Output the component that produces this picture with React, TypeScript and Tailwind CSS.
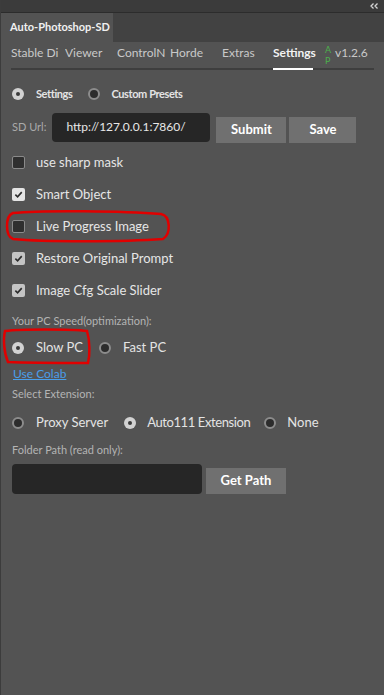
import React from 'react';

const font = { fontFamily: 'Lato, "Open Sans", sans-serif' };

const Check = ({ checked, dim }: { checked?: boolean; dim?: boolean }) =>
  checked ? (
    <span
      className={`flex h-[13px] w-[13px] shrink-0 items-center justify-center rounded-[2px] ${
        dim ? 'bg-[#c4c4c4]' : 'bg-[#e4e4e4]'
      }`}
    >
      <svg width="9" height="9" viewBox="0 0 10 10">
        <path d="M1.5 5.2 L4 7.6 L8.6 2.4" fill="none" stroke="#2b2b2b" strokeWidth="1.8" />
      </svg>
    </span>
  ) : (
    <span className="h-[13px] w-[13px] shrink-0 rounded-[2px] border border-[#8a8a8a] bg-[#2f2f2f]" />
  );

const Radio = ({ on, className = '' }: { on?: boolean; className?: string }) =>
  on ? (
    <span
      className={`flex h-[12px] w-[12px] shrink-0 items-center justify-center rounded-full bg-[#d2d2d2] ${className}`}
    >
      <span className="h-[4px] w-[4px] rounded-full bg-[#3a3a3a]" />
    </span>
  ) : (
    <span
      className={`block h-[12px] w-[12px] shrink-0 rounded-full border-2 border-[#8c8c8c] bg-[#2c2c2c] ${className}`}
    />
  );

const CheckRow = ({ label, checked, dim }: { label: string; checked?: boolean; dim?: boolean }) => (
  <div className="flex h-[32px] items-center gap-[11px] pl-[11px]">
    <Check checked={checked} dim={dim} />
    <span className="text-[13px] text-[#e6e6e6]">{label}</span>
  </div>
);

const App = () => {
  const tabs = ['Stable Di', 'Viewer', 'ControlN', 'Horde', 'Extras'];
  const widths = ['w-[54px]', 'w-[52px]', 'w-[53px]', 'w-[52px]', 'w-[51px]'];
  return (
    <div style={font} className="relative h-[695px] w-[384px] overflow-hidden border-l border-[#3c3c3c] bg-[#535353]">
      <div className="flex h-[13px] items-center justify-end border-b border-[#2c2c2c] bg-[#3b3b3b] pr-[6px]">
        <svg width="8" height="6" viewBox="0 0 8 6">
          <path d="M3.5 0.5 L1 3 L3.5 5.5 M7.5 0.5 L5 3 L7.5 5.5" fill="none" stroke="#d6d6d6" strokeWidth="1.3" />
        </svg>
      </div>
      <div className="flex h-[29px] bg-[#424242]">
        <div className="flex w-[112px] items-center bg-[#535353] pl-[9px] text-[11px] font-bold text-[#f0f0f0]">
          Auto-Photoshop-SD
        </div>
      </div>

      <div className="mx-[10px] flex h-[28px] items-end border-b-2 border-[#3e3e3e] text-[12px] text-[#c9c9c9]">
        {tabs.map((t, i) => (
          <div key={t} className={`overflow-hidden whitespace-nowrap pb-[6px] ${widths[i]}`}>
            <span className={i === 0 || i === 2 ? 'block w-[48px] overflow-hidden' : ''}>{t}</span>
          </div>
        ))}
        <div className="relative w-[52px] pb-[6px] font-bold text-[#f2f2f2]">
          Settings
          <span className="absolute bottom-[-2px] left-0 h-[2px] w-[40px] bg-white" />
        </div>
        <div className="mb-[2px] flex flex-col text-[9px] leading-[11px] text-[#4cb04c]">
          <span>A</span>
          <span>P</span>
        </div>
        <div className="ml-[4px] pb-[6px] text-[#c9c9c9]">v1.2.6</div>
      </div>

      <div className="mt-[16px] flex items-center pl-[11px] text-[11px] text-[#e4e4e4]">
        <Radio on />
        <span className="ml-[12px] font-bold tracking-[-0.4px]">Settings</span>
        <Radio className="ml-[16px]" />
        <span className="ml-[11px] font-bold tracking-[-0.4px]">Custom Presets</span>
      </div>

      <div className="mt-[9px] flex items-center pl-[11px]">
        <span className="text-[11px] text-[#aaaaaa]">SD Url:</span>
        <div className="ml-[6px] flex h-[29px] w-[158px] items-center rounded-[4px] bg-[#262626] pl-[14px] text-[12px] text-[#e8e8e8]">
          http://127.0.0.1:7860/
        </div>
        <button className="mt-[5px] ml-[6px] h-[26px] w-[70px] bg-[#707070] text-[13px] font-bold text-white">
          Submit
        </button>
        <button className="mt-[5px] ml-[3px] h-[26px] w-[67px] bg-[#707070] text-[13px] font-bold text-white">
          Save
        </button>
      </div>

      <div className="mt-[4px]">
        <CheckRow label="use sharp mask" />
        <CheckRow label="Smart Object" checked />
        <CheckRow label="Live Progress Image" />
        <CheckRow label="Restore Original Prompt" checked dim />
        <CheckRow label="Image Cfg Scale Slider" checked dim />
      </div>

      <div className="mt-[6px] pl-[11px] text-[11px] text-[#b4b4b4]">Your PC Speed(optimization):</div>
      <div className="mt-[9px] flex items-center pl-[11px] text-[13px] text-[#e4e4e4]">
        <Radio on />
        <span className="ml-[12px]">Slow PC</span>
        <Radio className="ml-[16px]" />
        <span className="ml-[12px]">Fast PC</span>
      </div>
      <div className="mt-[7px] pl-[12px] text-[12px] text-[#4a9eea] underline">Use Colab</div>
      <div className="mt-[3px] pl-[11px] text-[11px] text-[#b4b4b4]">Select Extension:</div>
      <div className="mt-[11px] flex items-center pl-[11px] text-[13px] text-[#e4e4e4]">
        <Radio />
        <span className="ml-[12px]">Proxy Server</span>
        <Radio on className="ml-[16px]" />
        <span className="ml-[11px] tracking-[-0.4px]">Auto111 Extension</span>
        <Radio className="ml-[14px]" />
        <span className="ml-[11px]">None</span>
      </div>
      <div className="mt-[9px] pl-[11px] text-[11px] text-[#b4b4b4]">Folder Path (read only):</div>
      <div className="mt-[6px] flex items-start pl-[11px]">
        <div className="h-[30px] w-[190px] rounded-[4px] bg-[#262626]" />
        <button className="mt-[4px] ml-[4px] h-[26px] w-[80px] bg-[#707070] text-[13px] font-bold text-white">
          Get Path
        </button>
      </div>

      <svg className="absolute top-[208px] left-[2px]" width="170" height="36" viewBox="0 0 170 36">
        <path
          d="M10 5 C40 2, 120 3, 158 6 C168 8, 168 26, 160 31 C120 34, 40 34, 10 31 C2 28, 2 8, 10 5 Z"
          fill="none"
          stroke="#e10000"
          strokeWidth="2.5"
        />
      </svg>
      <svg className="absolute top-[327px] left-0" width="92" height="39" viewBox="0 0 92 39">
        <path
          d="M4 4 C20 2, 70 2, 86 4 C89 14, 89 28, 87 36 C60 36, 28 36, 7 35 C3 26, 2 12, 4 4 Z"
          fill="none"
          stroke="#e10000"
          strokeWidth="2.5"
        />
      </svg>
    </div>
  );
};

export default App;
